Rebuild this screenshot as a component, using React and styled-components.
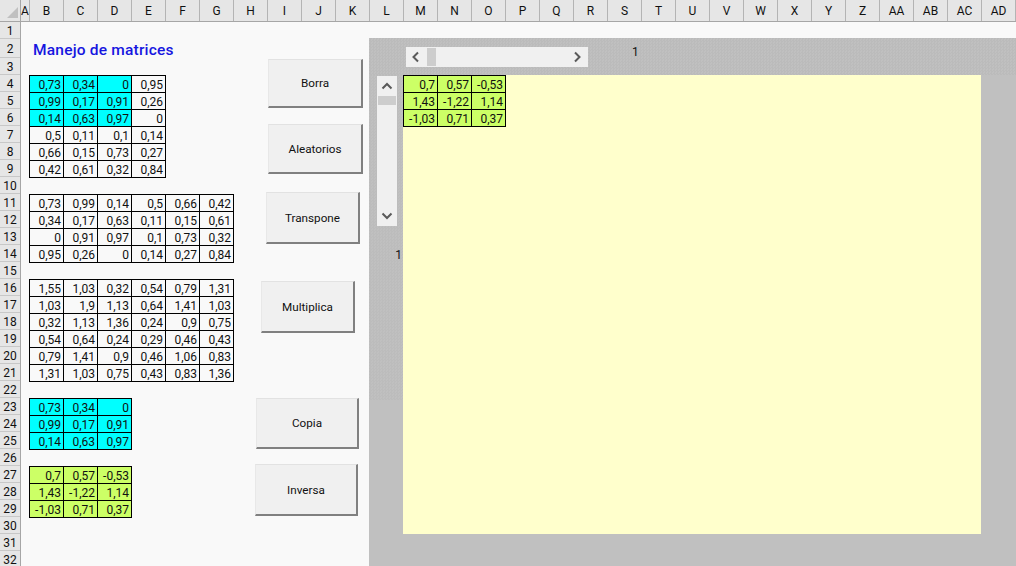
import React from 'react';
import styled, { createGlobalStyle } from 'styled-components';

const GlobalStyle = createGlobalStyle`
  html, body {
    margin: 0;
    padding: 0;
    width: 1016px;
    height: 566px;
    overflow: hidden;
    background: #f9f9f9;
    font-family: Roboto, "Open Sans", sans-serif;
  }
`;

const columns = ['B','C','D','E','F','G','H','I','J','K','L','M','N','O','P','Q','R','S','T','U','V','W','X','Y','Z','AA','AB','AC','AD'];

const rowHeights = Array.from({ length: 32 }, (_, i) => (i === 1 ? 19 : 17));

const m1 = [
  ['0,73', '0,34', '0', '0,95'],
  ['0,99', '0,17', '0,91', '0,26'],
  ['0,14', '0,63', '0,97', '0'],
  ['0,5', '0,11', '0,1', '0,14'],
  ['0,66', '0,15', '0,73', '0,27'],
  ['0,42', '0,61', '0,32', '0,84'],
];

const m2 = [
  ['0,73', '0,99', '0,14', '0,5', '0,66', '0,42'],
  ['0,34', '0,17', '0,63', '0,11', '0,15', '0,61'],
  ['0', '0,91', '0,97', '0,1', '0,73', '0,32'],
  ['0,95', '0,26', '0', '0,14', '0,27', '0,84'],
];

const m3 = [
  ['1,55', '1,03', '0,32', '0,54', '0,79', '1,31'],
  ['1,03', '1,9', '1,13', '0,64', '1,41', '1,03'],
  ['0,32', '1,13', '1,36', '0,24', '0,9', '0,75'],
  ['0,54', '0,64', '0,24', '0,29', '0,46', '0,43'],
  ['0,79', '1,41', '0,9', '0,46', '1,06', '0,83'],
  ['1,31', '1,03', '0,75', '0,43', '0,83', '1,36'],
];

const m4 = [
  ['0,73', '0,34', '0'],
  ['0,99', '0,17', '0,91'],
  ['0,14', '0,63', '0,97'],
];

const m5 = [
  ['0,7', '0,57', '-0,53'],
  ['1,43', '-1,22', '1,14'],
  ['-1,03', '0,71', '0,37'],
];

const buttons = [
  { label: 'Borra', left: 24, top: 37, width: 95, height: 49 },
  { label: 'Aleatorios', left: 24, top: 16, width: 95, height: 50 },
  { label: 'Transpone', left: 22, top: 18, width: 94, height: 52 },
  { label: 'Multiplica', left: 17, top: 37, width: 94, height: 52 },
  { label: 'Copia', left: 12, top: 65, width: 103, height: 51 },
  { label: 'Inversa', left: 11, top: 15, width: 103, height: 52 },
];

const Matrix = ({ data, fill, top, sticky }) => (
  <Grid $top={top} $cols={data[0].length}>
    {data.flat().map((value, i) => {
      const col = i % data[0].length;
      const row = Math.floor(i / data[0].length);
      const painted = fill && (!sticky || (col < 3 && row < 3));
      return <Cell key={i} $fill={painted ? fill : 'transparent'}>{value}</Cell>;
    })}
  </Grid>
);

const ChevronIcon = ({ d }) => (
  <svg width="12" height="12" viewBox="0 0 12 12" fill="none">
    <path d={d} stroke="#5a5a5a" strokeWidth="2" />
  </svg>
);

export default function App() {
  return (
    <Page>
      <GlobalStyle />
      <ColumnBar>
        <Corner><CornerMark /></Corner>
        <ColumnA>A</ColumnA>
        {columns.map((c) => <ColumnHead key={c}>{c}</ColumnHead>)}
      </ColumnBar>
      <Body>
        <RowBar>
          {rowHeights.map((h, i) => <RowHead key={i} $h={h}>{i + 1}</RowHead>)}
        </RowBar>
        <Sheet>
          <LeftPane>
            <Title>Manejo de matrices</Title>
            <Matrix data={m1} fill="#00ffff" sticky top={17} />
            <Matrix data={m2} top={17} />
            <Matrix data={m3} top={17} />
            <Matrix data={m4} fill="#00ffff" top={17} />
            <Matrix data={m5} fill="#ccff66" top={17} />
          </LeftPane>
          <ButtonPane>
            {buttons.map((b) => (
              <ActionButton key={b.label} $left={b.left} $top={b.top} $w={b.width} $h={b.height}>
                {b.label}
              </ActionButton>
            ))}
          </ButtonPane>
          <Panel>
            <TopStrip>
              <HScroll>
                <ChevronIcon d="M8 1.500 L3.500 6 L8 10.500" />
                <HThumb />
                <Spacer />
                <ChevronIcon d="M4 1.500 L8.500 6 L4 10.500" />
              </HScroll>
              <LinkedValue>1</LinkedValue>
            </TopStrip>
            <PanelRow>
              <SideStrip>
                <VScroll>
                  <ChevronIcon d="M1.500 8.500 L6 4 L10.500 8.500" />
                  <VThumb />
                  <Spacer />
                  <ChevronIcon d="M1.500 3.500 L6 8 L10.500 3.500" />
                </VScroll>
                <SideValue>1</SideValue>
              </SideStrip>
              <Canvas>
                <Matrix data={m5} fill="#ccff66" top={0} />
              </Canvas>
            </PanelRow>
          </Panel>
        </Sheet>
      </Body>
    </Page>
  );
}

const Page = styled.div`
  width: 1016px;
  height: 566px;
  overflow: hidden;
  display: flex;
  flex-direction: column;
  background: #f9f9f9;
  color: #111;
`;

const ColumnBar = styled.div`
  display: flex;
  height: 21px;
  flex: none;
  background: #e6e6e6;
  border-bottom: 1px solid #a6a6a6;
`;

const Corner = styled.div`
  width: 20px;
  flex: none;
  position: relative;
  border-right: 1px solid #a6a6a6;
`;

const CornerMark = styled.div`
  position: absolute;
  right: 2px;
  bottom: 3px;
  width: 0;
  height: 0;
  border-left: 11px solid transparent;
  border-bottom: 11px solid #c0c0c0;
`;

const ColumnA = styled.div`
  width: 8px;
  flex: none;
  font-size: 12px;
  line-height: 23px;
  height: 21px;
  text-align: center;
  border-right: 1px solid #b4b4b4;
  overflow: hidden;
`;

const ColumnHead = styled.div`
  width: 33px;
  flex: none;
  font-size: 12px;
  line-height: 23px;
  height: 21px;
  text-align: center;
  border-right: 1px solid #b4b4b4;
`;

const Body = styled.div`
  display: flex;
  flex: 1;
  min-height: 0;
`;

const RowBar = styled.div`
  width: 20px;
  flex: none;
  background: #e6e6e6;
  border-right: 1px solid #a6a6a6;
`;

const RowHead = styled.div`
  height: ${(p) => p.$h - 1}px;
  line-height: ${(p) => p.$h + 1}px;
  font-size: 12px;
  text-align: center;
  border-bottom: 1px solid #c8c8c8;
`;

const Sheet = styled.div`
  flex: 1;
  display: flex;
  min-width: 0;
`;

const LeftPane = styled.div`
  width: 223px;
  flex: none;
  padding-left: 8px;
  box-sizing: border-box;
`;

const Title = styled.div`
  height: 36px;
  padding: 17px 0 0 4px;
  box-sizing: border-box;
  font-family: Roboto, sans-serif;
  font-size: 15.5px;
  font-weight: 500;
  letter-spacing: 0.2px;
  line-height: 22px;
  color: #1616e0;
  margin-bottom: 17px;
  white-space: nowrap;
`;

const Grid = styled.div`
  display: grid;
  grid-template-columns: repeat(${(p) => p.$cols}, 34px);
  grid-auto-rows: 17px;
  width: max-content;
  margin-top: ${(p) => p.$top}px;
  border-top: 1px solid #000;
  border-left: 1px solid #000;
  box-sizing: content-box;
  margin-bottom: -1px;
`;

const Cell = styled.div`
  background: ${(p) => p.$fill};
  border-right: 1px solid #000;
  border-bottom: 1px solid #000;
  box-sizing: border-box;
  font-size: 12px;
  line-height: 18px;
  height: 17px;
  overflow: hidden;
  text-align: right;
  padding-right: 2px;
  color: #111;
`;

const ButtonPane = styled.div`
  width: 125px;
  flex: none;
  display: flex;
  flex-direction: column;
  align-items: flex-start;
`;

const ActionButton = styled.div`
  width: ${(p) => p.$w}px;
  height: ${(p) => p.$h}px;
  margin-left: ${(p) => p.$left}px;
  margin-top: ${(p) => p.$top}px;
  flex: none;
  display: flex;
  align-items: center;
  justify-content: center;
  box-sizing: border-box;
  background: #f0f0f0;
  border-top: 1px solid #e2e2e2;
  border-left: 1px solid #e8e8e8;
  border-right: 2px solid #808080;
  border-bottom: 2px solid #808080;
  font-size: 11.7px;
  color: #111;
`;

const Panel = styled.div`
  flex: 1;
  margin-top: 16px;
  background: #c0c0c0;
  min-width: 0;
`;

const TopStrip = styled.div`
  height: 37px;
  padding: 9px 0 0 37px;
  box-sizing: border-box;
  display: flex;
  align-items: flex-start;
  background: repeating-conic-gradient(#bbbbbb 0 25%, #c0c0c0 0 50%) 0 0 / 3px 3px;
`;

const HScroll = styled.div`
  width: 182px;
  height: 20px;
  background: #f0f0f0;
  display: flex;
  align-items: center;
  padding: 0 5px 0 4px;
  box-sizing: border-box;
`;

const HThumb = styled.div`
  width: 9px;
  height: 18px;
  margin-left: 5px;
  background: #cdcdcd;
`;

const Spacer = styled.div`
  flex: 1;
`;

const LinkedValue = styled.div`
  margin-left: 44px;
  font-size: 12px;
  line-height: 10px;
`;

const PanelRow = styled.div`
  display: flex;
  align-items: flex-start;
`;

const SideStrip = styled.div`
  width: 34px;
  flex: none;
  padding: 1px 1px 0 8px;
  box-sizing: border-box;
  height: 325px;
  background: repeating-conic-gradient(#bcbcbc 0 25%, #c0c0c0 0 50%) 0 0 / 3px 3px;
`;

const VScroll = styled.div`
  width: 20px;
  height: 150px;
  background: #f0f0f0;
  display: flex;
  flex-direction: column;
  align-items: center;
  padding: 4px 0;
  box-sizing: border-box;
`;

const VThumb = styled.div`
  width: 18px;
  height: 9px;
  margin-top: 4px;
  background: #cdcdcd;
`;

const SideValue = styled.div`
  margin-top: 21px;
  text-align: right;
  font-size: 12px;
  line-height: 16px;
`;

const Canvas = styled.div`
  width: 578px;
  height: 459px;
  background: #ffffcc;
`;
